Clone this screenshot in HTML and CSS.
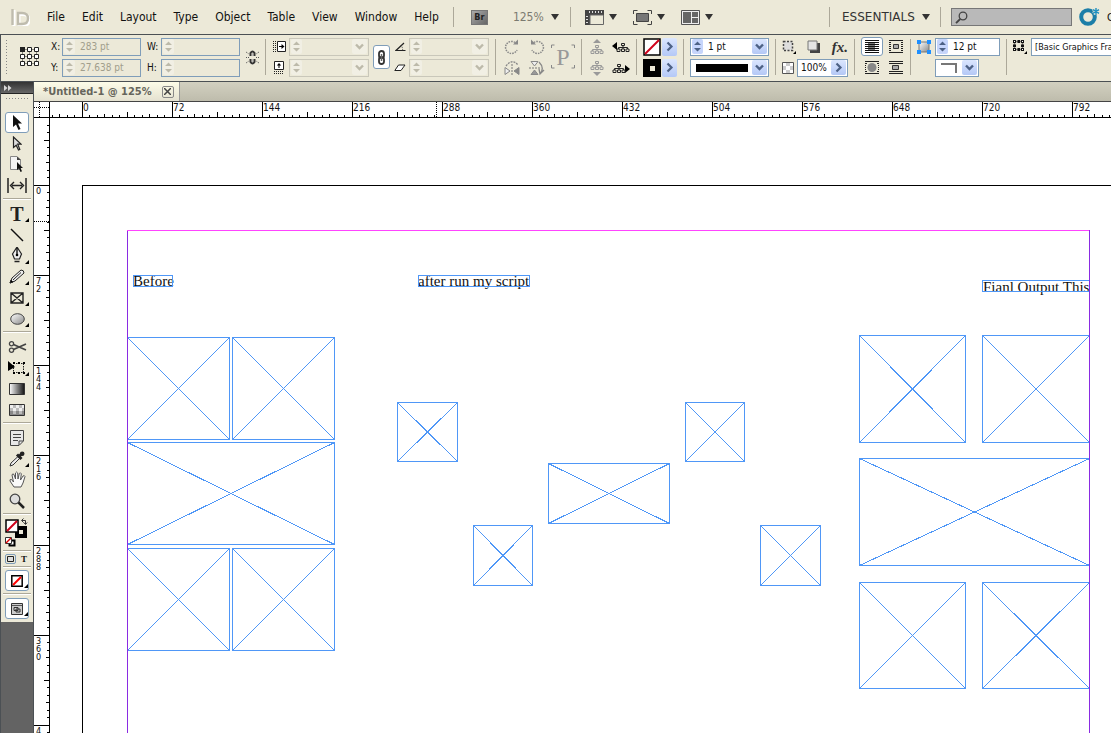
FILE: index.html
```html
<!DOCTYPE html>
<html lang="en">
<head>
<meta charset="utf-8">
<title>Untitled-1 @ 125%</title>
<link rel="stylesheet" href="styles.css">
</head>
<body>
<svg class="defs" width="0" height="0" aria-hidden="true">
  <defs>
    <linearGradient id="gGrey" x1="0" y1="0" x2="1" y2="1"><stop offset="0" stop-color="#fff"/><stop offset="1" stop-color="#888"/></linearGradient>
    <linearGradient id="gDark" x1="0" y1="0" x2="1" y2="0"><stop offset="0" stop-color="#fff"/><stop offset="1" stop-color="#111"/></linearGradient>
    <pattern id="ticksH" x="32" y="0" width="90" height="15" patternUnits="userSpaceOnUse">
      <path d="M0 0h1v15h-1zM7 13h1v2h-1zM15 13h1v2h-1zM22 12h1v3h-1zM30 13h1v2h-1zM37 13h1v2h-1zM45 10h1v5h-1zM52 13h1v2h-1zM60 13h1v2h-1zM67 12h1v3h-1zM75 13h1v2h-1zM82 13h1v2h-1z"/>
    </pattern>
    <pattern id="ticksV" x="0" y="67" width="15" height="90" patternUnits="userSpaceOnUse">
      <path d="M0 0h15v1h-15zM13 7h2v1h-2zM13 15h2v1h-2zM12 22h3v1h-3zM13 30h2v1h-2zM13 37h2v1h-2zM10 45h5v1h-5zM13 52h2v1h-2zM13 60h2v1h-2zM12 67h3v1h-3zM13 75h2v1h-2zM13 82h2v1h-2z"/>
    </pattern>
    <symbol id="spin" viewBox="0 0 11 15"><path d="M2 6 5.500 2.500 9 6zM2 9l3.500 3.500L9 9z" fill="currentColor"/></symbol>
    <symbol id="chev" viewBox="0 0 15 15"><path d="M4 5.500l3.500 3.500 3.500-3.500" fill="none" stroke="currentColor" stroke-width="2.400"/></symbol>
    <symbol id="chevR" viewBox="0 0 15 15"><path d="M5.500 3.500 9.500 7.500 5.500 11.500" fill="none" stroke="currentColor" stroke-width="2.200"/></symbol>
    <symbol id="tri" viewBox="0 0 8 6"><path d="M0 0h8L4 6z" fill="#333"/></symbol>
    <symbol id="tree" viewBox="0 0 14 9"><path d="M5.500.5h3v2h-3zM7 2.500V6M2.500 6V4.500h9V6M1 6h3v2.500H1zM5.500 6h3v2.500h-3zM10 6h3v2.500h-3z" fill="none" stroke="currentColor"/></symbol>
  </defs>
</svg>
<div class="app">
  <header class="menubar">
    <svg class="logo" width="19" height="17" viewBox="0 0 19 17"><path d="M2 0v16M7 4.500h4c4 0 6 2 6 5.500s-2 5.500-6 5.500H7z" fill="none" stroke="#fff" stroke-width="3" transform="translate(1 1)"/><path d="M1.500 0v16M7 4h4c4 0 6 2 6 5.500S15 15 11 15H7z" fill="none" stroke="#bfbcae" stroke-width="2.400"/></svg>
    <nav class="menus">
      <a href="#file">File</a><a href="#edit">Edit</a><a href="#layout">Layout</a><a href="#type">Type</a><a href="#object">Object</a><a href="#table">Table</a><a href="#view">View</a><a href="#window">Window</a><a href="#help">Help</a>
    </nav>
    <div class="appbar">
      <i class="sep"></i>
      <button class="bridge" type="button">Br</button>
      <label class="drop zoom"><select aria-label="Zoom level"><option>125%</option></select><svg width="8" height="6"><use href="#tri"/></svg></label>
      <i class="sep"></i>
      <button class="drop" type="button" aria-label="View options"><svg width="19" height="15" viewBox="0 0 19 15"><path d="M0 0h19v5H5v10H0z" fill="#444"/><path d="M5 5h13.500v9.500H5z" fill="#ece9d8" stroke="#666"/><path d="M4.500 1v2M7.500 1v2M10.500 1v2M13.500 1v2M16.500 1v2M1 6.500h2M1 9.500h2M1 12.500h2" stroke="#ddd"/></svg><svg width="8" height="6"><use href="#tri"/></svg></button>
      <button class="drop" type="button" aria-label="Screen mode"><svg width="19" height="15" viewBox="0 0 19 15"><path d="M.5 4V.5h4M14.500.5h4V4M18.500 11v3.500h-4M4.500 14.500h-4V11" fill="none" stroke="#444"/><path d="M3.500 3.500h12v8h-12z" fill="#777" stroke="#444"/></svg><svg width="8" height="6"><use href="#tri"/></svg></button>
      <button class="drop" type="button" aria-label="Arrange documents"><svg width="19" height="15" viewBox="0 0 19 15"><path d="M.5.500h18v14H.5z" fill="#eee" stroke="#555"/><path d="M2 2h8v11H2zM11 2h6v5h-6zM11 8h6v5h-6z" fill="#666"/></svg><svg width="8" height="6"><use href="#tri"/></svg></button>
    </div>
    <div class="workspace">
      <i class="sep"></i>
      <label class="drop essentials"><select aria-label="Workspace"><option>ESSENTIALS</option></select><svg width="8" height="6"><use href="#tri"/></svg></label>
      <i class="sep"></i>
      <label class="search"><svg width="13" height="13" viewBox="0 0 13 13"><circle cx="8" cy="5" r="3.800" fill="none" stroke="#444" stroke-width="1.300"/><path d="M5.200 8 1 12.200" stroke="#444" stroke-width="1.800"/></svg><input type="text" aria-label="Search"></label>
      <button class="live" type="button" aria-label="Live services"><svg width="21" height="20" viewBox="0 0 21 20"><circle cx="9" cy="10" r="6.800" fill="none" stroke="#1c7ea8" stroke-width="4"/><path d="M17 1v7M14 2.700l6 3.600M20 2.700l-6 3.600" stroke="#ece9d8" stroke-width="3"/><path d="M17 1v7M14 2.700l6 3.600M20 2.700l-6 3.600" stroke="#1c8fc0" stroke-width="1.400"/></svg></button>
      <span class="cut">C</span>
    </div>
  </header>

  <section class="control">
    <i class="grip"></i>
    <svg class="ref" width="20" height="20" viewBox="0 0 20 20"><path d="M2.500 2.500h14v14h-14zM2.500 9.500h14M9.500 2.500v14" fill="none" stroke="#222" stroke-dasharray="1 1"/><g fill="#fff" stroke="#222"><path d="M7.500.5h4v4h-4zM14.500.5h4v4h-4zM.5 7.500h4v4h-4zM7.500 7.500h4v4h-4zM14.500 7.500h4v4h-4zM.5 14.500h4v4h-4zM7.500 14.500h4v4h-4zM14.500 14.500h4v4h-4z"/></g><path d="M0 0h5v5H0z" fill="#222"/></svg>
    <div class="rows xy">
      <label for="fx">X:</label><div class="field off"><svg class="sp" width="11" height="15"><use href="#spin"/></svg><input id="fx" value="283 pt" disabled></div>
      <label for="fw">W:</label><div class="field off"><svg class="sp" width="11" height="15"><use href="#spin"/></svg><input id="fw" disabled></div>
      <label for="fy">Y:</label><div class="field off"><svg class="sp" width="11" height="15"><use href="#spin"/></svg><input id="fy" value="27.638 pt" disabled></div>
      <label for="fh">H:</label><div class="field off"><svg class="sp" width="11" height="15"><use href="#spin"/></svg><input id="fh" disabled></div>
    </div>
    <svg width="13" height="15" viewBox="0 0 13 15"><path d="M4.500 6V3q2-3 4 0v3M4.500 9v3q2 3 4 0V9" fill="none" stroke="#333" stroke-width="2"/><path d="M6.500 3v3M6.500 9v3" stroke="#bbb"/><path d="M0 2l3 2M13 2l-3 2M0 7.500h3M10 7.500h3M0 13l3-2M13 13l-3-2" stroke="#555" stroke-dasharray="1 1"/></svg>
    <i class="bar"></i>
    <div class="cluster">
      <div class="rows scale">
        <svg width="14" height="13" viewBox="0 0 14 13"><path d="M1 1.500h4M1 11.500h4M1.500 1v11M3.500 1v11" stroke="#222" stroke-dasharray="1 1"/><path d="M5.500 1.500h8v10h-8z" fill="#fff" stroke="#222"/><path d="M7 6.500h3" stroke="#000"/><path d="M9.500 4l3 2.500-3 2.500z"/></svg>
        <div class="field dim"><svg class="sp" width="11" height="15"><use href="#spin"/></svg><input aria-label="Scale X" disabled><button class="dd" type="button" aria-label="Scale X values" disabled><svg width="15" height="15"><use href="#chev"/></svg></button></div>
        <svg width="14" height="13" viewBox="0 0 14 13"><path d="M2 12.500h10M2 10.500h10" stroke="#222" stroke-dasharray="1 1"/><path d="M2.500.5h9v8h-9z" fill="#fff" stroke="#222"/><path d="M7 7V4" stroke="#000"/><path d="M4.800 4.500 7 2l2.200 2.500z"/></svg>
        <div class="field dim"><svg class="sp" width="11" height="15"><use href="#spin"/></svg><input aria-label="Scale Y" disabled><button class="dd" type="button" aria-label="Scale Y values" disabled><svg width="15" height="15"><use href="#chev"/></svg></button></div>
      </div>
      <button class="chain" type="button" aria-label="Constrain proportions"><svg width="9" height="15" viewBox="0 0 9 15"><rect x="2" y="1" width="5" height="7" rx="2.500" fill="none" stroke="#333" stroke-width="1.800"/><rect x="2" y="7" width="5" height="7" rx="2.500" fill="none" stroke="#333" stroke-width="1.800"/><path d="M4.500 4v7" stroke="#666" stroke-width="1.500"/></svg></button>
      <div class="rows angle">
        <svg width="11" height="10" viewBox="0 0 11 10"><path d="M9 1 1 8.500h9.500" fill="none" stroke="#222" stroke-width="1.200"/><path d="M6 3.500q2 2 1.500 5" fill="none" stroke="#444" stroke-dasharray="1 1"/></svg>
        <div class="field dim"><svg class="sp" width="11" height="15"><use href="#spin"/></svg><input aria-label="Rotation" disabled><button class="dd" type="button" aria-label="Rotation values" disabled><svg width="15" height="15"><use href="#chev"/></svg></button></div>
        <svg width="12" height="8" viewBox="0 0 12 8"><path d="M4.500 1h6.500L7 6.500H.8z" fill="#fff" stroke="#222"/></svg>
        <div class="field dim"><svg class="sp" width="11" height="15"><use href="#spin"/></svg><input aria-label="Shear" disabled><button class="dd" type="button" aria-label="Shear values" disabled><svg width="15" height="15"><use href="#chev"/></svg></button></div>
      </div>
    </div>
    <i class="bar"></i>
    <div class="rows rotate">
      <svg width="16" height="16" viewBox="0 0 16 16"><path d="M11 3.500A6 6 0 1 0 13 11" fill="none" stroke="#888" stroke-width="1.500" stroke-dasharray="1.500 1"/><path d="M9 5.500h5v-5z" fill="#888"/></svg>
      <svg width="16" height="16" viewBox="0 0 16 16"><path d="M5 3.500A6 6 0 1 1 3 11" fill="none" stroke="#888" stroke-width="1.500" stroke-dasharray="1.500 1"/><path d="M7 5.500H2v-5z" fill="#888"/></svg>
      <svg width="16" height="16" viewBox="0 0 16 16"><path d="M8 4v12" stroke="#777" stroke-dasharray="2 1"/><path d="M1 7.500v7L6 11z" fill="#eee" stroke="#888"/><path d="M15 7.500v7L10 11z" fill="#888" stroke="#888"/><path d="M2 6q6-8 12-1" fill="none" stroke="#888" stroke-width="1.300" stroke-dasharray="2 1"/></svg>
      <svg width="16" height="16" viewBox="0 0 16 16"><path d="M0 8h12" stroke="#777" stroke-dasharray="2 1"/><path d="M2 1.500h7L5.500 6z" fill="#eee" stroke="#888"/><path d="M2 14.500h7L5.500 10z" fill="#999" stroke="#888"/><path d="M10 2q6 6 1 12M15 10l-4 4-1-5" fill="none" stroke="#888" stroke-width="1.300"/></svg>
    </div>
    <div class="para"><svg width="24" height="26" viewBox="0 0 24 26"><path d="M.5 4V1h3M20.500 1h3v3M23.500 21v3h-3M3.500 24h-3v-3" fill="none" stroke="#888"/></svg><span>P</span></div>
    <i class="bar"></i>
    <div class="rows select">
      <svg class="pale" width="14" height="16" viewBox="0 0 14 16"><path d="M7 0l4 4H3z" fill="currentColor"/><use href="#tree" y="6" width="14" height="9"/></svg>
      <svg width="18" height="12" viewBox="0 0 18 12"><path d="M0 5l5-4v8z"/><use href="#tree" x="4" y="2" width="14" height="9"/></svg>
      <svg class="pale" width="14" height="16" viewBox="0 0 14 16"><use href="#tree" y="1" width="14" height="9"/><path d="M7 16l4-4H3z" fill="currentColor"/></svg>
      <svg width="18" height="12" viewBox="0 0 18 12"><path d="M18 7l-5-4v8z"/><use href="#tree" y="2" width="14" height="9"/></svg>
    </div>
    <i class="bar"></i>
    <div class="rows paint">
      <svg width="18" height="18" viewBox="0 0 18 18"><path d="M1 1h16v16H1z" fill="#fff" stroke="#000" stroke-width="1.500"/><path d="M2 16 16 2" stroke="#d0021b" stroke-width="2"/></svg>
      <button class="dd" type="button" aria-label="Fill"><svg width="15" height="15"><use href="#chevR"/></svg></button>
      <svg width="18" height="18" viewBox="0 0 18 18"><path d="M0 0h18v18H0z"/><path d="M7 7h5v5H7z" fill="#ece9d8"/></svg>
      <button class="dd" type="button" aria-label="Stroke"><svg width="15" height="15"><use href="#chevR"/></svg></button>
    </div>
    <i class="bar"></i>
    <div class="rows stroke">
      <div class="field"><svg class="sp" width="11" height="15"><use href="#spin"/></svg><input aria-label="Stroke weight" value="1 pt"><button class="dd" type="button" aria-label="Stroke weights"><svg width="15" height="15"><use href="#chev"/></svg></button></div>
      <div class="field"><i class="line"></i><button class="dd" type="button" aria-label="Stroke type"><svg width="15" height="15"><use href="#chev"/></svg></button></div>
    </div>
    <i class="bar"></i>
    <div class="rows effects">
      <div class="trio">
        <svg width="15" height="14" viewBox="0 0 15 14"><path d="M1.500 1.500h9v9h-9z" fill="#ddd" stroke="#444" stroke-width="1.500" stroke-dasharray="2 1.500"/><path d="M11 14h3v-3z"/></svg>
        <svg width="14" height="14" viewBox="0 0 14 14"><path d="M3 3h10v10H3z" fill="#444"/><path d="M1 1h9v9H1z" fill="#e4e4e4" stroke="#777"/></svg>
        <span class="fx">fx.</span>
      </div>
      <div class="opacity">
        <svg width="12" height="12" viewBox="0 0 12 12"><path d="M.5.500h11v11H.5z" fill="#fff" stroke="#555"/><path d="M4 1h4v3H4zM1 4h3v4H1zM8 4h3v4H8zM4 8h4v3H4z" fill="#ccc"/></svg>
        <div class="field"><input aria-label="Opacity" value="100%"><button class="dd" type="button" aria-label="Opacity slider"><svg width="15" height="15"><use href="#chevR"/></svg></button></div>
      </div>
    </div>
    <i class="bar"></i>
    <div class="rows wrap">
      <button class="picked" type="button" aria-label="No text wrap"><svg width="14" height="13" viewBox="0 0 14 13"><path d="M3 3h7v7H3z" fill="#777"/><path d="M0 .5h14M0 2.500h14M0 4.500h14M0 6.500h14M0 8.500h14M0 10.500h14M0 12.500h14" stroke="#111"/></svg></button>
      <svg width="14" height="13" viewBox="0 0 14 13"><path d="M0 .5h14M0 12.500h14M0 2.500h2M0 4.500h2M0 6.500h2M0 8.500h2M0 10.500h2M12 2.500h2M12 4.500h2M12 6.500h2M12 8.500h2M12 10.500h2" stroke="#222"/><path d="M4.500 4.500h5v4h-5z" fill="#aaa" stroke="#333"/></svg>
      <svg width="14" height="13" viewBox="0 0 14 13"><path d="M0 .5h14M0 12.500h14M0 2.500h2M0 4.500h1M0 6.500h1M0 8.500h1M0 10.500h2M12 2.500h2M13 4.500h1M13 6.500h1M13 8.500h1M12 10.500h2" stroke="#222"/><circle cx="7" cy="6.500" r="4.500" fill="#888"/></svg>
      <svg width="14" height="13" viewBox="0 0 14 13"><path d="M0 .5h14M0 2.500h14M0 10.500h14M0 12.500h14" stroke="#222"/><path d="M3.500 4.500h6v4h-6z" fill="#aaa" stroke="#333"/></svg>
    </div>
    <i class="bar"></i>
    <div class="rows corner">
      <svg width="14" height="14" viewBox="0 0 14 14"><path d="M2 2h10v10H2z" fill="url(#gGrey)" stroke="#777"/><path d="M0 0h4v4H0zM10 0h4v4h-4zM0 10h4v4H0zM10 10h4v4h-4z" fill="#1e8fff"/></svg>
      <div class="field"><svg class="sp" width="11" height="15"><use href="#spin"/></svg><input aria-label="Corner size" value="12 pt"></div>
      <span></span>
      <div class="field short"><svg class="shape" width="17" height="10" viewBox="0 0 17 10"><path d="M0 1h15v9" fill="none" stroke="#777" stroke-width="2"/></svg><button class="dd" type="button" aria-label="Corner shape"><svg width="15" height="15"><use href="#chev"/></svg></button></div>
    </div>
    <i class="bar"></i>
    <div class="styles">
      <svg width="15" height="14" viewBox="0 0 15 14"><path d="M1.500 1.500h8v8h-8z" fill="none" stroke="#111" stroke-width="1.500" stroke-dasharray="1 1"/><path d="M0 0h3v3H0zM4.500 0h2.500v3H4.500zM8 0h3v3H8zM0 4.500h3V7H0zM8 4.500h3V7H8zM0 8h3v3H0zM4.500 8H7v3H4.500zM8 8h3v3H8z" fill="#111"/><path d="M1 1h1v1H1zM9 1h1v1H9zM1 9h1v1H1zM9 9h1v1H9z" fill="#fff"/><path d="M11 14h3v-3z"/></svg>
      <select class="style" aria-label="Object style"><option>[Basic Graphics Frame]</option></select>
    </div>
  </section>

  <div class="work">
    <aside class="toolcol">
      <div class="toolhead"><svg width="8" height="6" viewBox="0 0 8 6"><path d="M0 0l3.500 3L0 6zM4 0l3.500 3L4 6z" fill="#d8d8d8"/></svg></div>
      <div class="tools">
        <i class="dots"></i>
        <button class="tool on" type="button" aria-label="Selection"><svg width="10" height="15" viewBox="0 0 10 15"><path d="M1 0v12l3-2.500L6.500 15l2-1L6 8.500h4z" fill="#111"/></svg></button>
        <button class="tool" type="button" aria-label="Direct selection"><svg width="10" height="15" viewBox="0 0 10 15"><path d="M1.500 1v10.500L4.200 9.200 6.500 14l1.300-.6L5.700 8.200h3.500z" fill="#ddd" stroke="#222" stroke-width="1.200"/></svg></button>
        <button class="tool" type="button" aria-label="Page"><svg width="14" height="17" viewBox="0 0 14 17"><path d="M.5.500H7L10.500 4v9.500H.5z" fill="#f4f4f4" stroke="#888"/><path d="M7 .5V4h4z" fill="#444"/><path d="M7 6v8l2-1.500 1.500 3.500 1.500-.8-1.500-3.200H13z" fill="#111"/></svg></button>
        <button class="tool" type="button" aria-label="Gap"><svg width="20" height="15" viewBox="0 0 20 15"><path d="M1 0v15M19 0v15" stroke="#222" stroke-width="1.500"/><path d="M5 7.500h10M7 4 3.500 7.500 7 11M13 4l3.500 3.500L13 11" fill="none" stroke="#222" stroke-width="1.400"/></svg></button>
        <i class="rule"></i>
        <button class="tool type more" type="button" aria-label="Type">T</button>
        <button class="tool" type="button" aria-label="Line"><svg width="14" height="14" viewBox="0 0 14 14"><path d="M1 1l12 12" stroke="#111" stroke-width="1.400"/></svg></button>
        <button class="tool more" type="button" aria-label="Pen"><svg width="12" height="17" viewBox="0 0 12 17"><path d="M6 0 1.500 7l2 5h5l2-5z" fill="#eee" stroke="#222" stroke-width="1.200"/><path d="M6 1v7M3.500 14.500h5" stroke="#222" stroke-width="1.500"/><circle cx="6" cy="8" r="1.300"/></svg></button>
        <button class="tool more" type="button" aria-label="Pencil"><svg width="16" height="15" viewBox="0 0 16 15"><path d="M1 14l2-5 9-8q3 0 3 3l-9 8z" fill="#eee" stroke="#222"/><path d="M1 14l1-3 2 2zM4 11l8-7.500" stroke="#222"/></svg></button>
        <button class="tool more" type="button" aria-label="Rectangle frame"><svg width="14" height="12" viewBox="0 0 14 12"><path d="M1 1h12v10H1zM1 1l12 10M13 1 1 11" fill="none" stroke="#222" stroke-width="1.400"/></svg></button>
        <button class="tool more" type="button" aria-label="Ellipse"><svg width="15" height="12" viewBox="0 0 15 12"><ellipse cx="7.500" cy="6" rx="6.800" ry="5.300" fill="url(#gGrey)" stroke="#444"/></svg></button>
        <i class="rule"></i>
        <button class="tool" type="button" aria-label="Scissors"><svg width="19" height="12" viewBox="0 0 19 12"><path d="M5.500 3.500 18 9M5.500 8.500 18 3" stroke="#444" stroke-width="1.700"/><circle cx="3.500" cy="2.800" r="2.100" fill="none" stroke="#444" stroke-width="1.300"/><circle cx="3.500" cy="9.200" r="2.100" fill="none" stroke="#444" stroke-width="1.300"/></svg></button>
        <button class="tool more" type="button" aria-label="Free transform"><svg width="18" height="14" viewBox="0 0 18 14"><path d="M5.500 2.500h10v9h-10z" fill="none" stroke="#222" stroke-dasharray="1.500 1"/><path d="M5 1h2v2H5zM15 1h2v2h-2zM5 11h2v2H5zM15 11h2v2h-2zM10 1h2v2h-2zM10 11h2v2h-2z"/><path d="M0 0v10l7-4z"/></svg></button>
        <button class="tool" type="button" aria-label="Gradient"><svg width="16" height="12" viewBox="0 0 16 12"><path d="M.5.500h15v11H.5z" fill="url(#gDark)" stroke="#333"/></svg></button>
        <button class="tool" type="button" aria-label="Gradient feather"><svg width="16" height="12" viewBox="0 0 16 12"><path d="M.5.500h15v11H.5z" fill="#eee" stroke="#333"/><path d="M1 7h14v4H1z" fill="#888"/><path d="M1 4h3v3H1zM7 4h3v3H7zM13 4h2v3h-2zM4 1h3v3H4zM10 1h3v3h-3zM4 7h3v3H4zM10 7h3v3h-3z" fill="#bbb"/></svg></button>
        <i class="rule"></i>
        <button class="tool" type="button" aria-label="Note"><svg width="14" height="16" viewBox="0 0 14 16"><path d="M.5.500h13V11L9 15.500H.5z" fill="#e8e8e8" stroke="#444"/><path d="M3 4.500h8M3 7.500h8M3 10.500h5M9 15v-4h4" fill="none" stroke="#444"/></svg></button>
        <button class="tool more" type="button" aria-label="Eyedropper"><svg width="16" height="16" viewBox="0 0 16 16"><path d="M1 15l1-3 7-6.500 1.800 1.700L4 14z" fill="#eee" stroke="#333"/><path d="M8 3.500 12.500 8M9.500 6 13 2.500" stroke="#222" stroke-width="3"/><circle cx="13.200" cy="2.700" r="2.300" fill="#222"/></svg></button>
        <button class="tool" type="button" aria-label="Hand"><svg width="17" height="17" viewBox="0 0 17 17"><path d="M5 16 1 10q-.5-2 1.500-1.500L4.500 11 3 4q.5-2 2-.5L6.500 8V2q1-2 2.200 0L9 8l1.300-5.500q1.200-1.500 2 .3L11.500 9 14 5q1.500-1 2 .5L14 12l-2 4z" fill="#fafafa" stroke="#555"/></svg></button>
        <button class="tool" type="button" aria-label="Zoom"><svg width="16" height="16" viewBox="0 0 16 16"><circle cx="6" cy="6" r="4.800" fill="#ddd" stroke="#444" stroke-width="1.300"/><path d="M9.500 9.500 15 15" stroke="#222" stroke-width="2.500"/></svg></button>
        <i class="rule"></i>
        <svg class="swatches" width="24" height="30" viewBox="0 0 24 30"><path d="M12 10h8v8h-8z" fill="#ece9d8" stroke="#000" stroke-width="4"/><path d="M1 2h12v12H1z" fill="#fff" stroke="#000" stroke-width="1.500"/><path d="M2 13 12 3" stroke="#d0021b" stroke-width="2"/><path d="M17 2.500h3.500V6M18.500.500l-2 2 2 2M18.800 4.500l1.700 2 1.700-2" fill="none" stroke="#333"/><path d="M4.500 22.500h5v5h-5z" fill="#fff" stroke="#000" stroke-width="2"/><path d="M.5 19.500h6v6h-6z" fill="#fff" stroke="#333"/><path d="M1 25l5-5" stroke="#d00" stroke-width="1.500"/></svg>
        <i class="rule tight"></i>
        <div class="pair"><button type="button" aria-label="Formatting affects container"><svg width="7" height="6" viewBox="0 0 7 6"><path d="M.5.500h6v5h-6z" fill="#ddd" stroke="#222"/></svg></button><button class="plain" type="button" aria-label="Formatting affects text">T</button></div>
        <i class="rule tight"></i>
        <button class="tool on more" type="button" aria-label="Apply none"><svg width="12" height="12" viewBox="0 0 12 12"><path d="M.8.800h10.400v10.400H.8z" fill="#fff" stroke="#000" stroke-width="1.500"/><path d="M2 10 10 2" stroke="#f00" stroke-width="2"/></svg></button>
        <i class="rule"></i>
        <button class="tool on more" type="button" aria-label="Screen mode"><svg width="12" height="12" viewBox="0 0 12 12"><path d="M.5.500h11v11H.5z" fill="#ccc" stroke="#333"/><path d="M1 2.500h10" stroke="#555"/><path d="M3 4.500h4v3H3zM5 6h4v3H5z" fill="none" stroke="#333"/></svg></button>
      </div>
    </aside>

    <main class="doc">
      <div class="tabs"><div class="tab"><span>*Untitled-1 @ 125%</span><button type="button" aria-label="Close document"><svg width="7" height="7" viewBox="0 0 7 7"><path d="M0 0l7 7M7 0 0 7" stroke="#444" stroke-width="1.500"/></svg></button></div></div>
      <div class="board">
        <svg class="origin" viewBox="0 0 15 15" shape-rendering="crispEdges"><path d="M5.500 0v15M0 5.500h15" stroke="#000" stroke-dasharray="1 1"/></svg>
        <div class="hruler">
          <svg width="100%" height="15" shape-rendering="crispEdges"><rect width="100%" height="15" fill="url(#ticksH)"/><path d="M386.500 0v15" stroke="#000" stroke-dasharray="1 1"/></svg>
          <div class="marks"><span>0</span><span>72</span><span>144</span><span>216</span><span>288</span><span>360</span><span>432</span><span>504</span><span>576</span><span>648</span><span>720</span><span>792</span></div>
        </div>
        <div class="vruler">
          <svg width="15" height="100%" shape-rendering="crispEdges"><rect width="15" height="100%" fill="url(#ticksV)"/><path d="M0 103.500h15" stroke="#000" stroke-dasharray="1 1"/></svg>
          <div class="marks"><span>0</span><span>72</span><span>144</span><span>216</span><span>288</span><span>360</span><span>4</span></div>
        </div>
        <div class="canvas">
          <svg width="100%" height="100%">
            <g transform="translate(-50 -118)" fill="none" shape-rendering="crispEdges">
              <path d="M4000 185.500H82.500V2000" stroke="#000"/>
              <path d="M127 230.500H1090" stroke="#ff44ff"/>
              <g stroke="#4f97f7">
                <path d="M127.500 337.500h102v102h-102zl102 102m0-102-102 102"/>
                <path d="M232.500 337.500h102v102h-102zl102 102m0-102-102 102"/>
                <path d="M127.500 442.500h207v102h-207zl207 102m0-102-207 102"/>
                <path d="M127.500 548.500h102v102h-102zl102 102m0-102-102 102"/>
                <path d="M232.500 548.500h102v102h-102zl102 102m0-102-102 102"/>
                <path d="M397.500 402.500h60v59h-60zl60 59m0-59-60 59"/>
                <path d="M473.500 525.500h59v60h-59zl59 60m0-60-59 60"/>
                <path d="M548.500 463.500h121v60h-121zl121 60m0-60-121 60"/>
                <path d="M685.500 402.500h59v59h-59zl59 59m0-59-59 59"/>
                <path d="M760.500 525.500h60v60h-60zl60 60m0-60-60 60"/>
                <path d="M859.500 335.500h106v107h-106zl106 107m0-107-106 107"/>
                <path d="M982.500 335.500h107v107h-107zl107 107m0-107-107 107"/>
                <path d="M859.500 458.500h230v107h-230zl230 107m0-107-230 107"/>
                <path d="M859.500 582.500h106v106h-106zl106 106m0-106-106 106"/>
                <path d="M982.500 582.500h107v106h-107zl107 106m0-106-107 106"/>
              </g>
              <g class="copy" fill="#111">
                <text x="133" y="286">Before</text>
                <text x="418" y="286">after run my script</text>
                <text x="983" y="292">Fianl Output This</text>
              </g>
              <path d="M133.500 275.500h39v11h-39zM418.500 275.500h111v11h-111zM982.500 280.500h107v11h-107z" stroke="#4f97f7"/>
              <path d="M127.500 231V2000M1089.500 230V2000" stroke="#8a2be2"/>
            </g>
          </svg>
        </div>
      </div>
    </main>
  </div>
</div>
</body>
</html>
```
FILE: styles.css
```css
* { box-sizing: border-box; }
body { margin: 0; background: #ece9d8; font-family: "DejaVu Sans Condensed", "DejaVu Sans", sans-serif; font-size: 10px; color: #111; }
button, input, select { font: inherit; color: inherit; margin: 0; padding: 0; border: 0; background: none; border-radius: 0; outline: 0; }
select { appearance: none; }
svg { display: block; flex: none; }
.defs { position: absolute; }
.app { display: flex; flex-direction: column; height: 100vh; overflow: hidden; }

.menubar { display: flex; align-items: center; height: 34px; flex: none; overflow: hidden; padding-left: 11px; }
.logo { margin-right: 17px; }
.menus { display: flex; gap: 17px; font-size: 12px; }
.menus a { color: #111; text-decoration: none; }
.appbar { display: flex; align-items: center; gap: 14px; margin-left: 14px; }
.sep { width: 1px; height: 20px; background: #aca899; flex: none; }
.bridge { width: 17px; height: 15px; background: linear-gradient(135deg, #aaa, #666); border: 1px solid #777; font-size: 9px; font-weight: bold; line-height: 12px; color: #222; margin: 0 11px 0 3px; }
.drop { display: flex; align-items: center; gap: 5px; margin-right: 2px; }
.zoom { font-size: 12px; color: #7b7a70; gap: 7px; margin-right: -3px; }
.workspace { display: flex; align-items: center; gap: 10px; margin-left: auto; }
.essentials { font-family: "DejaVu Sans", sans-serif; font-size: 12px; color: #333; gap: 7px; margin: 0 0 0 2px; }
.search { display: flex; align-items: center; width: 121px; height: 18px; background: #b9b9b9; border: 1px solid #777; padding-left: 3px; }
.search input { width: 90px; }
.live { margin-left: -3px; }
.cut { width: 4px; overflow: hidden; margin-left: -3px; font-size: 11px; }

.control { display: flex; align-items: center; gap: 6px; height: 48px; flex: none; overflow: hidden; border: 1px solid #4b5054; border-width: 1px 0 1px 1px; padding: 0 0 2px 4px; }
.grip { width: 4px; height: 36px; margin-right: 5px; background: radial-gradient(circle, #888 1px, transparent 1px) 0 0 / 3px 3px; flex: none; }
.ref { margin-right: 5px; }
.bar { width: 1px; height: 36px; background: #aca899; flex: none; }
.rows { display: grid; grid-auto-rows: 19px; row-gap: 2px; align-items: center; justify-items: center; flex: none; }
.xy { grid-template-columns: 11px 79px 20px 79px; justify-items: stretch; }
.xy label:nth-of-type(even) { padding-left: 6px; }
.scale { grid-template-columns: 14px 80px; column-gap: 3px; }
.angle { grid-template-columns: 12px 80px; column-gap: 3px; }
.rotate { grid-template-columns: 16px 16px; column-gap: 9px; margin-left: 2px; }
.select { grid-template-columns: 18px 19px; column-gap: 5px; color: #222; }
.paint { grid-template-columns: 18px 15px; column-gap: 1px; }
.stroke { grid-template-columns: 79px; }
.effects { grid-template-columns: 66px; justify-items: stretch; }
.wrap { grid-template-columns: 22px 16px; column-gap: 5px; }
.corner { grid-template-columns: 14px 65px; column-gap: 4px; justify-items: start; }
.cluster { display: flex; align-items: center; gap: 4px; }
.pale { color: #999; }
.field { display: flex; align-items: center; width: 100%; height: 18px; border: 1px solid #7f9db9; background: #fff; padding: 1px; color: #4d6185; }
.field input { flex: 1; min-width: 0; width: 20px; padding-left: 5px; color: #111; height: 14px; }
.sp { background: #c6d5fb; border-radius: 2px; }
.dd { width: 15px; height: 15px; border-radius: 2px; background: linear-gradient(#dbe6fe, #b4c8f6); color: #4d6185; flex: none; }
.off, .dim { background: #ece9d8; color: #bdbaaa; }
.field.off input { color: #a19e8c; }
.dim { border-color: #c9c7ba; }
.off .sp, .dim .sp, .dim .dd { background: #f1efe4; color: #bdbaaa; }
.chain { display: grid; place-items: center; width: 17px; height: 24px; border: 1px solid #7f9db9; border-radius: 3px; background: #fff; }
.para { display: grid; place-items: center; }
.para > * { grid-area: 1 / 1; }
.para span { font: 24px "Liberation Serif", serif; line-height: 24px; color: #999; }
.paint .dd { height: 18px; display: grid; place-items: center; }
.line { flex: 1; height: 8px; background: #000; margin: 0 4px; }
.trio, .opacity { display: flex; align-items: center; justify-content: space-between; }
.fx { font: italic bold 15px "Liberation Serif", serif; line-height: 18px; color: #333; }
.opacity .field { width: 51px; }
.opacity input { padding-left: 2px; }
.picked { width: 22px; height: 19px; display: grid; place-items: center; border: 1px solid #7f9db9; border-radius: 3px; background: #fff; }
.corner .short { width: 44px; justify-content: space-between; }
.shape { margin-left: 4px; }
.styles { display: flex; flex: 1; gap: 3px; align-items: center; align-self: flex-start; margin-top: 3px; min-width: 0; }
.style { flex: 1; min-width: 0; height: 18px; border: 1px solid #7f9db9; border-right: 0; background: #fff; padding-left: 3px; font-size: 9px; }

.work { display: flex; flex: 1; min-height: 0; }
.toolcol { width: 34px; flex: none; background: #636363; border: 1px solid #4b5054; border-width: 0 1px; overflow: hidden; }
.toolhead { height: 12px; background: linear-gradient(#333, #666); border-bottom: 1px solid #222; padding: 3px; }
.tools { display: flex; flex-direction: column; align-items: center; background: #ece9d8; padding-bottom: 3px; }
.dots { width: 24px; height: 4px; margin: 3px 0 11px; background: radial-gradient(circle, #888 1px, transparent 1px) 0 0 / 3px 3px; }
.tool { position: relative; width: 24px; height: 21px; display: grid; place-items: center; flex: none; }
.tool.on { border: 1px solid #7f9db9; border-radius: 3px; background: #fff; }
.more::after { content: ""; position: absolute; right: 0; bottom: 2px; border: 2px solid transparent; border-right-color: #000; border-bottom-color: #000; }
.type { font: bold 20px "Liberation Serif", serif; color: #222; line-height: 20px; }
.rule { width: 28px; height: 2px; margin: 2px 0 3px; background: #aca899; border-bottom: 1px solid #fff; flex: none; }
.tight { margin: 2px 0; }
.pair { display: flex; gap: 3px; align-items: center; height: 10px; }
.pair button { width: 11px; height: 10px; display: grid; place-items: center; border: 1px solid #7f9db9; border-radius: 2px; }
.pair .plain { border: 0; font: bold 9px "Liberation Serif", serif; }

.doc { flex: 1; min-width: 0; display: flex; flex-direction: column; }
.tabs { height: 20px; flex: none; display: flex; background: linear-gradient(#d2d0c0, #bebcac); border-bottom: 1px solid #444; }
.tab { display: flex; align-items: center; gap: 10px; padding: 0 5px 0 9px; background: linear-gradient(#fdfce8, #e4e1d0); border-right: 1px solid #999; font-size: 11px; font-weight: bold; color: #66655c; }
.tab button { width: 12px; height: 12px; border: 1px solid #888; border-radius: 2px; display: grid; place-items: center; }
.board { flex: 1; min-height: 0; display: grid; grid-template: 16px 1fr / 16px 1fr; background: #fff; }
.origin { width: 16px; height: 16px; border: 1px solid #000; border-width: 0 1px 1px 0; }
.hruler { display: grid; border-bottom: 1px solid #000; overflow: hidden; }
.vruler { display: grid; border-right: 1px solid #000; overflow: hidden; }
.hruler > *, .vruler > * { grid-area: 1 / 1; min-width: 0; min-height: 0; }
.marks { display: flex; font-size: 10px; line-height: 11px; }
.hruler .marks { padding-left: 33px; }
.hruler span { width: 90px; flex: none; }
.vruler .marks { flex-direction: column; padding: 69px 0 0 2px; font-size: 9px; line-height: 8px; }
.vruler span { width: 6px; height: 90px; flex: none; word-break: break-all; }
.canvas { overflow: hidden; min-width: 0; min-height: 0; }
.copy { font: 15px "Liberation Serif", serif; }
```
